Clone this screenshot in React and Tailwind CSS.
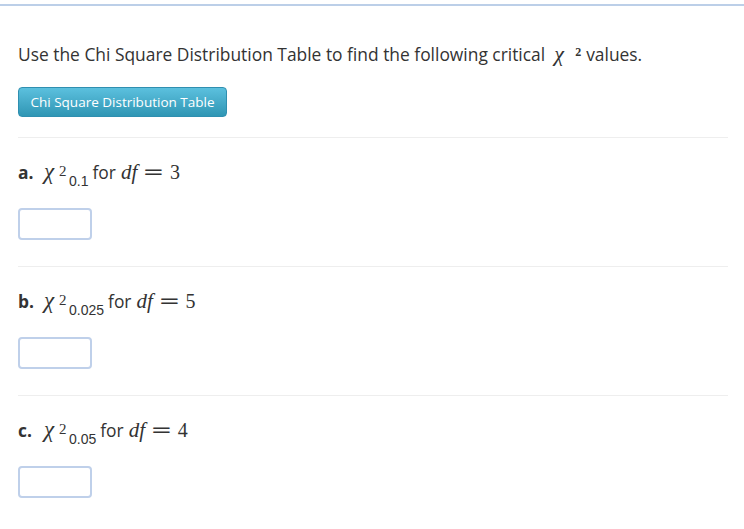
import React from "react";

const SERIF = "font-['Liberation_Serif',serif]";

function Item({ letter, sub, df }) {
  return (
    <div className="border-t border-[#eeeeee] pt-[22px] pb-[26px]">
      <div className="flex items-baseline text-[17.4px] text-[#333] h-[24px] leading-[24px]">
        <span className="font-bold w-[14px]">{letter}.</span>
        <span className={`ml-[12px] inline-block w-[15px] text-[23px] italic ${SERIF}`}>χ</span>
        <span className={`relative top-[-3px] inline-block w-[10px] text-[15px] ${SERIF}`}>2</span>
        <span className="relative top-[7px] text-[14px] font-['Liberation_Sans',sans-serif]">{sub}</span>
        <span className="ml-[4px]">for</span>
        <span className={`ml-[5px] text-[21px] italic ${SERIF}`}>df</span>
        <span className="ml-[8px] inline-block scale-x-[1.3] text-[20px] font-['DejaVu_Serif',serif]">=</span>
        <span className={`ml-[8px] text-[20px] ${SERIF}`}>{df}</span>
      </div>
      <div className="mt-[24px] w-[74px] h-[32px] rounded-[4px] border-2 border-[#bfd0ea] bg-white" />
    </div>
  );
}

export default function App() {
  return (
    <div className="w-[744px] h-[529px] bg-white overflow-hidden font-['Open_Sans',sans-serif]">
      <div className="mt-[4px] h-[2px] bg-[#bccfe8]" />
      <div className="px-[18px] pr-[16px]">
        <p className="mt-[31px] text-[17.4px] text-[#333] flex items-baseline">
          <span>Use the Chi Square Distribution Table to find the following critical</span>
          <span className={`ml-[9px] inline-block w-[16px] text-[22px] italic ${SERIF}`}>χ</span>
          <span className={`relative top-[-5px] ml-[5px] text-[12px] font-bold ${SERIF}`}>2</span>
          <span className="ml-[5px]">values.</span>
        </p>
        <button className="mt-[17px] h-[30px] w-[209px] rounded-[4px] border border-[#2f8fb0] bg-gradient-to-b from-[#5bc0de] to-[#2f96b4] text-[13.5px] text-white">
          Chi Square Distribution Table
        </button>
        <div className="mt-[20px]">
          <Item letter="a" sub="0.1" df="3" />
          <Item letter="b" sub="0.025" df="5" />
          <Item letter="c" sub="0.05" df="4" />
        </div>
      </div>
    </div>
  );
}
